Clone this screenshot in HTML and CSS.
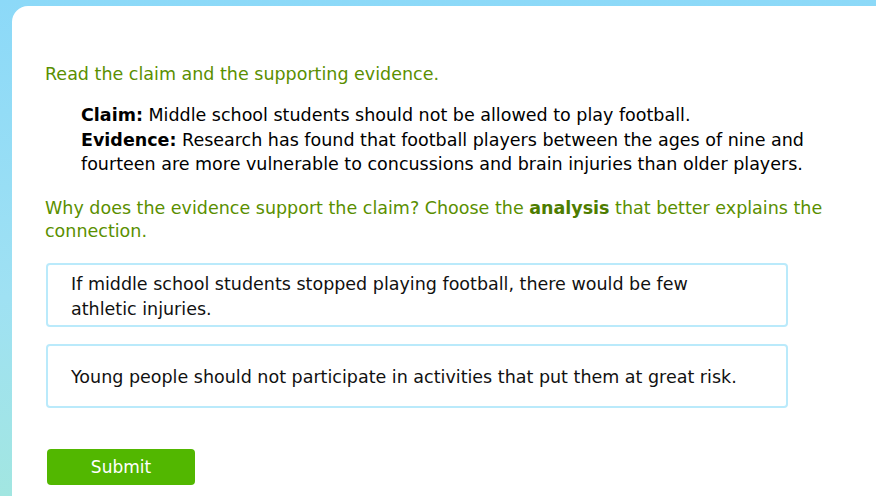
FILE: index.html
```html
<!DOCTYPE html>
<html>
<head>
<meta charset="utf-8">
<link rel="stylesheet" href="styles.css">
</head>
<body>
<div class="page">
  <main class="card">
    <p class="prompt">Read the claim and the supporting evidence.</p>
    <div class="passage">
      <p><b>Claim:</b> Middle school students should not be allowed to play football.</p>
      <p><b>Evidence:</b> Research has found that football players between the ages of nine and fourteen are more vulnerable to concussions and brain injuries than older players.</p>
    </div>
    <p class="question">Why does the evidence support the claim? Choose the <b>analysis</b> that better explains the connection.</p>
    <div class="options">
      <div class="option">If middle school students stopped playing football, there would be few athletic injuries.</div>
      <div class="option">Young people should not participate in activities that put them at great risk.</div>
    </div>
    <button class="submit">Submit</button>
  </main>
</div>
</body>
</html>
```
FILE: styles.css
```css
html, body {
  margin: 0;
  padding: 0;
  height: 100%;
}
body {
  background: linear-gradient(180deg, #8cd9f8 0%, #9fe1f3 60%, #a2e6e1 100%);
  font-family: "DejaVu Sans", Verdana, sans-serif;
  overflow: hidden;
}
.page {
  padding: 6px 0 0 12px;
  height: 100%;
  box-sizing: border-box;
}
.card {
  background: #fff;
  border-top-left-radius: 16px;
  height: 100%;
  box-sizing: border-box;
  padding: 56px 40px 0 33px;
}
p { margin: 0; }
.prompt {
  color: #5a8f00;
  font-size: 17.5px;
  line-height: 24px;
}
.passage {
  margin: 17px 0 0 36px;
  font-size: 17.5px;
  line-height: 24.5px;
  color: #000;
  max-width: 740px;
}
.question {
  margin-top: 20px;
  color: #5a8f00;
  font-size: 17.5px;
  line-height: 23px;
  max-width: 800px;
}
.question b { color: #4d7c00; }
.options {
  margin-top: 20px;
  display: flex;
  flex-direction: column;
  gap: 17px;
  width: 742px;
  margin-left: 1px;
}
.option {
  border: 2px solid #baeafb;
  border-radius: 4px;
  min-height: 64px;
  box-sizing: border-box;
  padding: 7px 30px 3px 23px;
  font-size: 17.5px;
  line-height: 25px;
  color: #111;
  display: flex;
  align-items: center;
}
.submit {
  margin: 41px 0 0 2px;
  width: 148px;
  height: 36px;
  padding-top: 2px;
  background: #52b700;
  border: none;
  border-radius: 4px;
  color: #fff;
  font-family: "DejaVu Sans", Verdana, sans-serif;
  font-size: 17px;
}
```
